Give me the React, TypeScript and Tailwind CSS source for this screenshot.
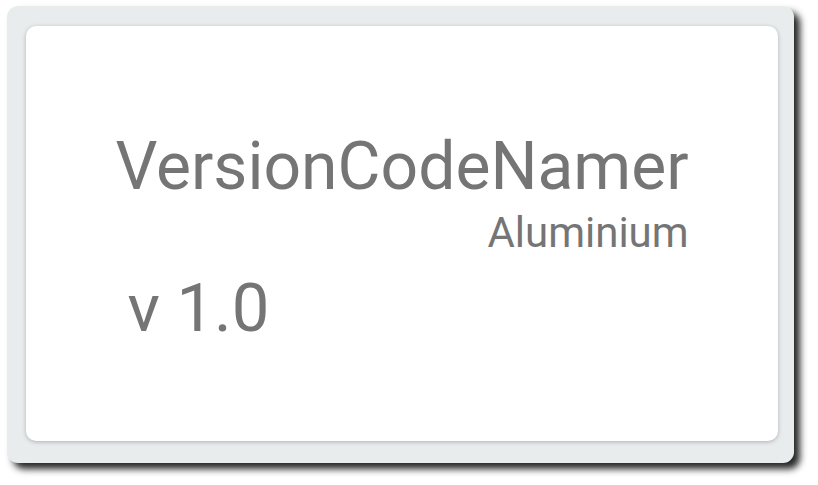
export default function App() {
  return (
    <div className="w-[818px] h-[485px] bg-white" style={{ fontFamily: "Roboto, 'Liberation Sans', sans-serif" }}>
      <div className="pl-[7px] pt-[6px]">
        <div className="w-[787px] h-[457px] rounded-[11px] bg-[#e9ecec] p-[20px] pl-[19px] pr-[16px] pb-[22px] shadow-[6px_6px_7px_rgba(0,0,0,0.85)]">
          <div className="h-full w-full rounded-[10px] bg-white shadow-[0_1px_4px_rgba(0,0,0,0.25)] flex flex-col items-center pt-[103px]">
            <div className="flex flex-col items-end text-[#757575]">
              <div className="text-[66px] leading-[76px]">VersionCodeNamer</div>
              <div className="text-[42px] leading-[48px] mt-[4px]">Aluminium</div>
              <div className="self-start pl-[12px] text-[67px] leading-[76px] mt-[13px]">v 1.0</div>
            </div>
          </div>
        </div>
      </div>
    </div>
  );
}
